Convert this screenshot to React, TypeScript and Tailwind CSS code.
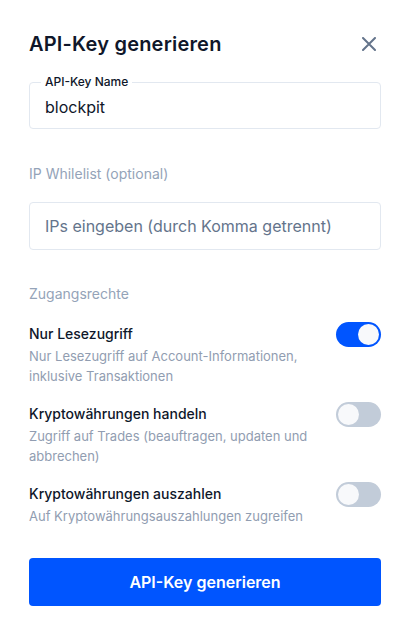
import { useState } from "react"

type Perm = { title: string; desc: string; on: boolean }

const perms: Perm[] = [
  { title: "Nur Lesezugriff", desc: "Nur Lesezugriff auf Account-Informationen, inklusive Transaktionen", on: true },
  { title: "Kryptowährungen handeln", desc: "Zugriff auf Trades (beauftragen, updaten und abbrechen)", on: false },
  { title: "Kryptowährungen auszahlen", desc: "Auf Kryptowährungsauszahlungen zugreifen", on: false },
]

function Toggle({ on, onClick }: { on: boolean; onClick: () => void }) {
  return (
    <button
      onClick={onClick}
      className={`relative shrink-0 w-[45px] h-[25px] rounded-full ${on ? "bg-[#0055ff]" : "bg-[#c2ccd9]"}`}
    >
      <span
        className={`absolute top-[2px] w-[21px] h-[21px] rounded-full bg-[#f8f9fb] ${on ? "left-[22px]" : "left-[2px]"}`}
      />
    </button>
  )
}

export default function App() {
  const [state, setState] = useState(perms.map((p) => p.on))

  return (
    <div className="min-h-screen bg-white px-[29px] pt-[30px] font-['Inter',sans-serif] text-[#0f172a]">
      <div className="flex items-center justify-between h-[28px]">
        <h2 className="text-[20px] font-semibold leading-[28px] tracking-[0.2px]">API-Key generieren</h2>
        <svg width="14" height="14" viewBox="0 0 14 14" className="mr-[5px] text-[#64748b]">
          <path d="M1 1L13 13M13 1L1 13" stroke="currentColor" strokeWidth="2" strokeLinecap="round" />
        </svg>
      </div>

      <div className="relative mt-[24px] h-[47px] rounded-[4px] border border-[#e2e8f0] flex items-center px-[15px]">
        <span className="absolute -top-[9px] left-[11px] bg-white px-[4px] text-[12px] leading-[16px] font-medium">
          API-Key Name
        </span>
        <span className="text-[16px] leading-[24px] mt-[2px]">blockpit</span>
      </div>

      <p className="mt-[35px] text-[14px] leading-[20px] text-[#94a3b8]">IP Whilelist (optional)</p>

      <div className="mt-[18px] h-[48px] rounded-[4px] border border-[#e2e8f0] flex items-center px-[15px]">
        <span className="text-[16px] leading-[24px] text-[#64748b]">IPs eingeben (durch Komma getrennt)</span>
      </div>

      <p className="mt-[34px] text-[14px] leading-[20px] text-[#94a3b8]">Zugangsrechte</p>

      <div className="mt-[20px] flex flex-col gap-[18px]">
        {perms.map((p, i) => (
          <div key={p.title} className="flex items-start justify-between gap-4">
            <div className="max-w-[280px]">
              <p className="text-[14px] leading-[20px] font-medium">{p.title}</p>
              <p className="mt-[2px] text-[13px] leading-[20px] text-[#919db1]">{p.desc}</p>
            </div>
            <div className="-mt-[2px]">
              <Toggle on={state[i]} onClick={() => setState(state.map((s, j) => (j === i ? !s : s)))} />
            </div>
          </div>
        ))}
      </div>

      <button className="mt-[32px] w-full h-[48px] rounded-[4px] bg-[#0055ff] text-white text-[16px] font-semibold">
        API-Key generieren
      </button>
    </div>
  )
}
